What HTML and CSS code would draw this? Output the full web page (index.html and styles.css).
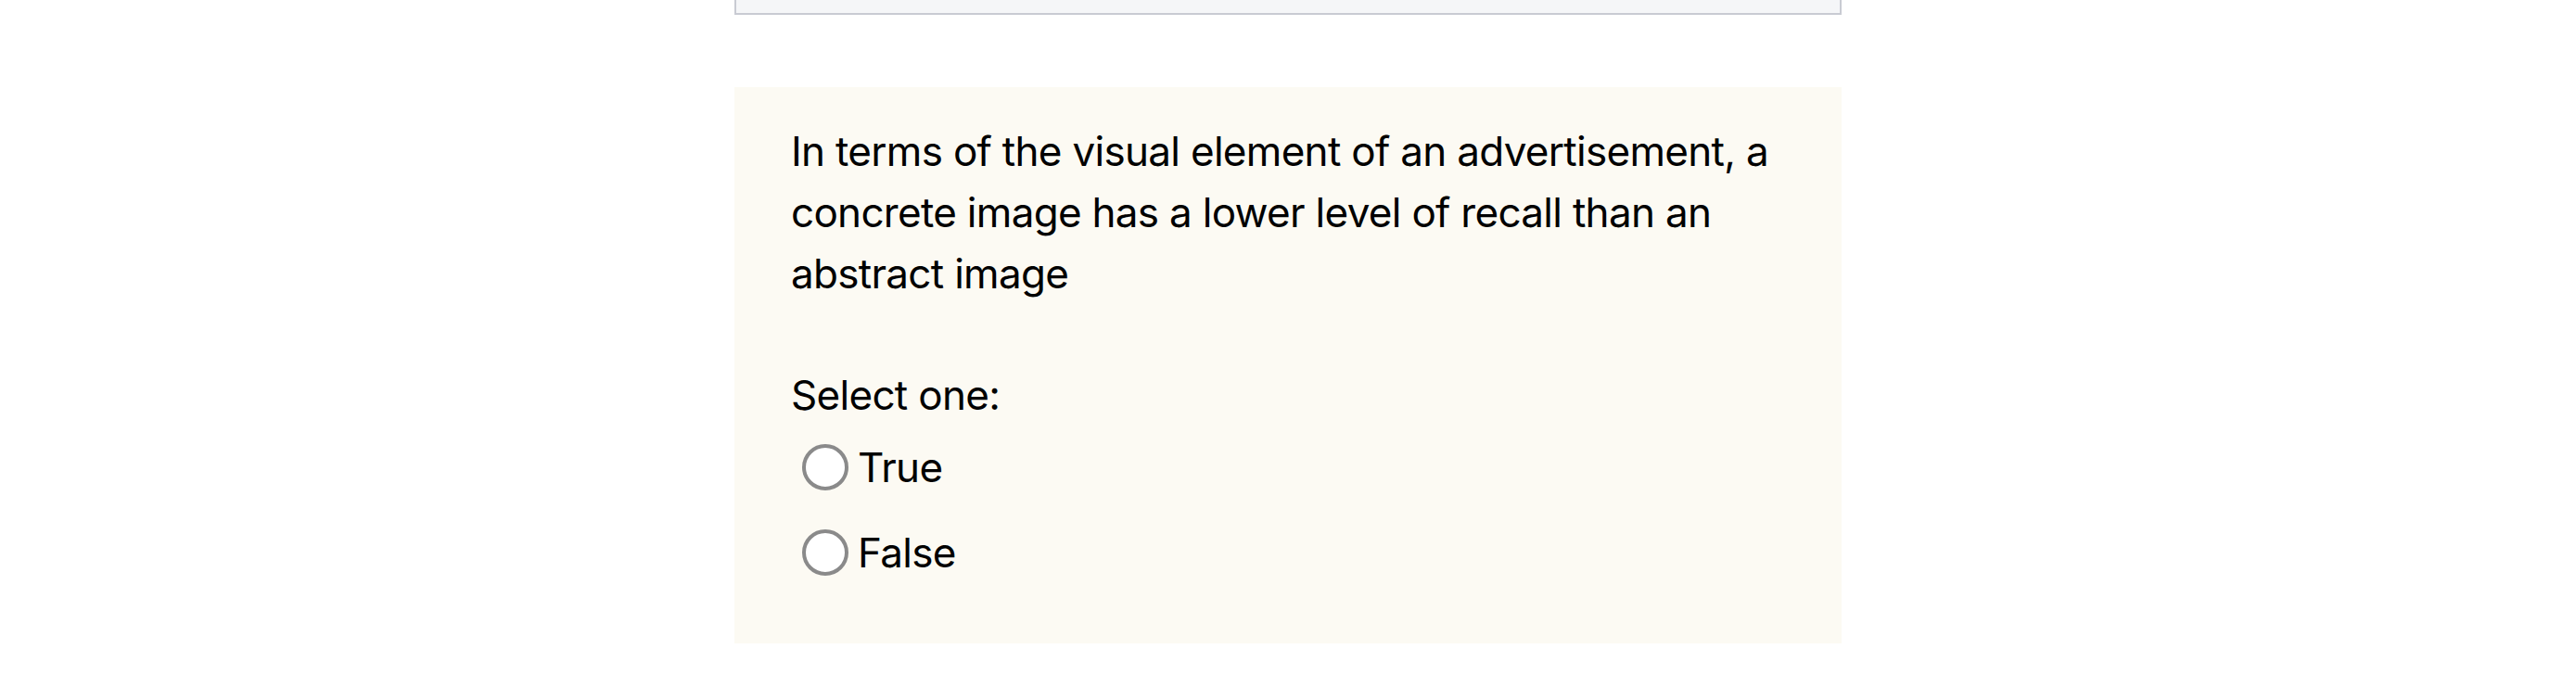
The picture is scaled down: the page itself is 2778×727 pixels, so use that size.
FILE: index.html
```html
<!DOCTYPE html>
<html lang="en">
<head>
<meta charset="utf-8">
<title>Question</title>
<link rel="stylesheet" href="styles.css">
</head>
<body>
<div class="page">
  <div class="prev-box"></div>
  <div class="question">
    <div class="qtext">In terms of the visual element of an advertisement, a concrete image has a lower level of recall than an abstract image</div>
    <div class="prompt">Select one:</div>
    <div class="answer">
      <label class="option"><span class="radio"></span><span class="label">True</span></label>
      <label class="option"><span class="radio"></span><span class="label">False</span></label>
    </div>
  </div>
</div>
</body>
</html>
```
FILE: styles.css
```css
html, body {
  margin: 0;
  padding: 0;
  background: #ffffff;
}
body {
  font-family: Inter, "Noto Sans", "Liberation Sans", sans-serif;
  color: #000000;
  letter-spacing: -0.7px;
}
.page {
  width: 1194px;
  margin: 0 auto;
}
.prev-box {
  height: 16px;
  box-sizing: border-box;
  background: #f5f6f8;
  border: 2px solid #c9cbd3;
  border-top: none;
}
.question {
  margin-top: 78px;
  background: #fcfaf3;
  padding: 36px 40px 0 61px;
  height: 600px;
  box-sizing: border-box;
}
.qtext {
  font-size: 44px;
  line-height: 66px;
}
.prompt {
  font-size: 44px;
  line-height: 66px;
  margin-top: 65px;
}
.answer {
  display: flex;
  flex-direction: column;
  margin-left: 12px;
}
.option {
  display: flex;
  align-items: center;
  height: 92px;
  font-size: 44px;
}
.option:first-child {
  margin-top: -1px;
}
.radio {
  width: 50px;
  height: 50px;
  box-sizing: border-box;
  border: 4.5px solid #8a8a8a;
  border-radius: 50%;
  background: #ffffff;
  margin-right: 10px;
  flex: none;
}
```
